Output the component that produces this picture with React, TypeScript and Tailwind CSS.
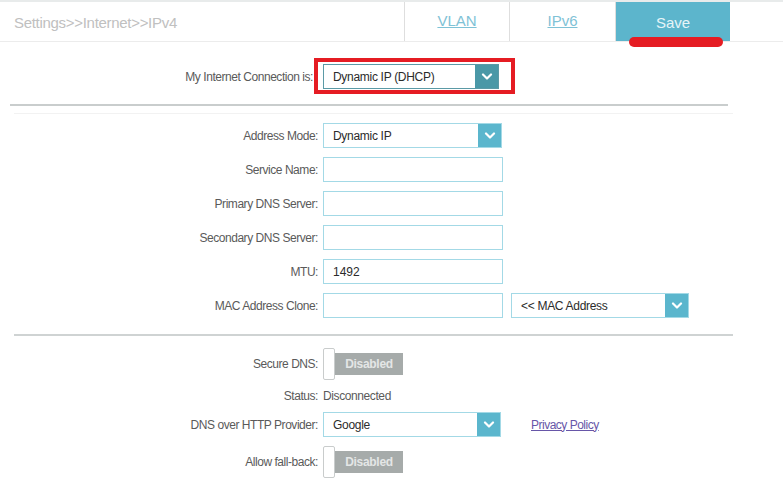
import React from "react";

const font = { fontFamily: '"Liberation Sans", Arial, sans-serif' };

function Chevron() {
  return (
    <svg width="12" height="8" viewBox="0 0 12 8" fill="none">
      <path d="M2 1.5 L6 5.5 L10 1.5" stroke="white" strokeWidth="2.2" strokeLinecap="round" strokeLinejoin="round" />
    </svg>
  );
}

function Select({ value, width, dark }: { value: string; width: string; dark?: boolean }) {
  return (
    <div
      className={`flex h-[25px] ${width} border ${dark ? "border-[#5b9aa6]" : "border-[#a3d9e6]"} bg-white`}
    >
      <div className="flex-1 flex items-center pl-[9px] text-[12px] text-[#2b2b2b] tracking-[-0.3px]">{value}</div>
      <div className={`w-[23px] flex items-center justify-center ${dark ? "bg-[#4a98a7]" : "bg-[#5bb6cd]"}`}>
        <Chevron />
      </div>
    </div>
  );
}

function Input({ value }: { value?: string }) {
  return (
    <div className="h-[25px] w-[180px] border border-[#a3d9e6] bg-white flex items-center pl-[9px] text-[12px] text-[#2b2b2b]">
      {value}
    </div>
  );
}

function Toggle() {
  return (
    <div className="flex items-center">
      <div className="w-[12px] h-[32px] bg-white border border-[#c9cccc] rounded-[2px]" />
      <div className="w-[68px] h-[22px] bg-[#a6abaa] flex items-center justify-center text-[12px] font-bold text-[#e4e6e6] tracking-[-0.3px]">
        Disabled
      </div>
    </div>
  );
}

function Row({
  label,
  children,
  className = "",
  labelClass = "",
}: {
  label: string;
  children: React.ReactNode;
  className?: string;
  labelClass?: string;
}) {
  return (
    <div className={`flex items-center ${className}`}>
      <div className={`w-[318px] text-right text-[12px] text-[#5a5a5a] tracking-[-0.45px] ${labelClass}`}>{label}</div>
      <div className="ml-[5px] flex items-center">{children}</div>
    </div>
  );
}

export default function App() {
  return (
    <div className="w-[783px] h-[499px] bg-white overflow-hidden" style={font}>
      <div className="h-[2px] bg-[#e8ebeb]" />

      <div className="relative flex h-[40px] border-b border-[#ececec]">
        <div className="pl-[14px] pt-[10px] text-[15px] text-[#c0c0c0] tracking-[-0.3px]">Settings&gt;&gt;Internet&gt;&gt;IPv4</div>
        <div className="ml-auto mr-[53px] flex">
          <div className="w-[106px] border-l border-r border-[#dedede] flex items-center justify-center text-[15px] text-[#7fc2d6] underline">
            VLAN
          </div>
          <div className="w-[106px] border-r border-[#dedede] flex items-center justify-center text-[15px] text-[#7fc2d6] underline">
            IPv6
          </div>
          <div className="w-[114px] bg-[#5cb5cc] flex items-start justify-center pt-[10px] text-[15px] text-[#e6f4f8]">
            Save
          </div>
        </div>
        <div className="absolute left-[629px] top-[35px] w-[94px] h-[10px] rounded-full bg-[#e51c23]" />
      </div>

      <Row label="My Internet Connection is:" className="mt-[22px]" labelClass="pr-[5px]">
        <div className="relative">
          <Select value="Dynamic IP (DHCP)" width="w-[176px]" dark />
          <div className="absolute -left-[9px] -top-[6px] -right-[16px] -bottom-[5px] border-4 border-[#e51c23]" />
        </div>
      </Row>

      <div className="mt-[15px] ml-[10px] w-[718px] h-[2px] bg-[#c9cdcd]" />
      <div className="mt-[7px] ml-[14px] w-[719px] h-[1px] bg-[#f2f2f2]" />

      <div className="mt-[9px] flex flex-col gap-[9px]">
        <Row label="Address Mode:">
          <Select value="Dynamic IP" width="w-[179px]" />
        </Row>
        <Row label="Service Name:">
          <Input />
        </Row>
        <Row label="Primary DNS Server:">
          <Input />
        </Row>
        <Row label="Secondary DNS Server:">
          <Input />
        </Row>
        <Row label="MTU:">
          <Input value="1492" />
        </Row>
        <Row label="MAC Address Clone:">
          <Input />
          <div className="ml-[8px]">
            <Select value="<< MAC Address" width="w-[178px]" />
          </div>
        </Row>
      </div>

      <div className="mt-[16px] ml-[14px] w-[719px] h-[2px] bg-[#cfd3d3]" />

      <Row label="Secure DNS:" className="mt-[12px]">
        <Toggle />
      </Row>
      <Row label="Status:" className="mt-[3px] h-[25px]">
        <span className="text-[12px] text-[#5a5a5a] tracking-[-0.4px]">Disconnected</span>
      </Row>
      <Row label="DNS over HTTP Provider:" className="mt-[4px]">
        <Select value="Google" width="w-[178px]" />
        <a className="ml-[30px] text-[12px] text-[#6756a8] underline tracking-[-0.5px]">Privacy Policy</a>
      </Row>
      <Row label="Allow fall-back:" className="mt-[9px]">
        <Toggle />
      </Row>
    </div>
  );
}
